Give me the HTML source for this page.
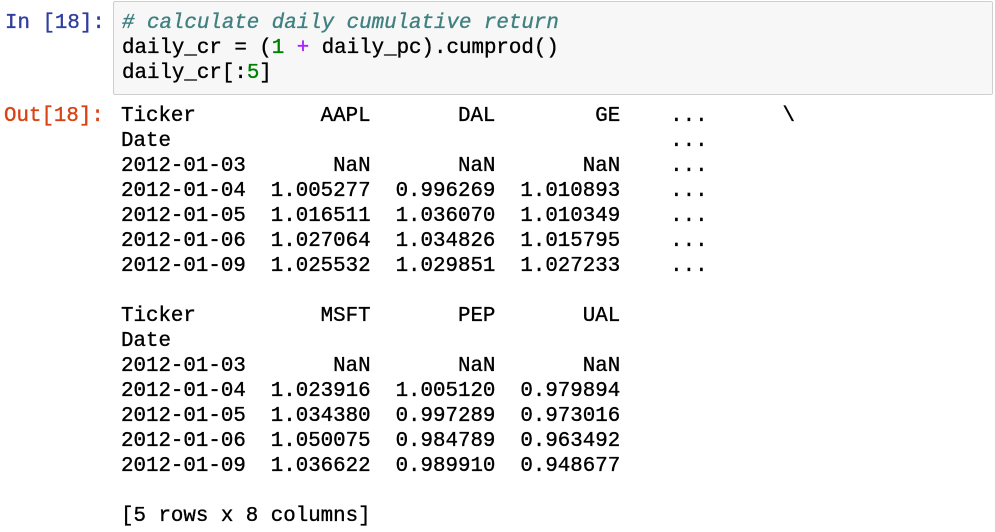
<!DOCTYPE html>
<html><head><style>
body{margin:0;width:995px;height:532px;background:#fff;overflow:hidden;position:relative;font-family:"Liberation Mono",monospace;font-size:20.8px;color:#000;-webkit-text-stroke:0.35px}
.p{position:absolute;white-space:pre;line-height:25px}
.in{color:#303f9f;left:5px;top:11px}
.out{color:#d84315;left:4px;top:104px}
.box{position:absolute;left:113px;top:1px;width:878px;height:92px;border:1px solid #cfcfcf;border-radius:2px;background:#f7f7f7}
.c{color:#408080;font-style:italic}
.n{color:#008000}
.o{color:#aa22ff}
</style></head><body>
<div class="p in">In [18]:</div>
<div class="box"></div>
<div class="p" style="left:122px;top:11px"><span class="c"># calculate daily cumulative return</span>
daily_cr = (<span class="n">1</span> <span class="o">+</span> daily_pc).cumprod()
daily_cr[:<span class="n">5</span>]</div>
<div class="p out">Out[18]:</div>
<div class="p" style="left:121px;top:104px">Ticker          AAPL       DAL        GE    ...      \
Date                                        ...
2012-01-03       NaN       NaN       NaN    ...
2012-01-04  1.005277  0.996269  1.010893    ...
2012-01-05  1.016511  1.036070  1.010349    ...
2012-01-06  1.027064  1.034826  1.015795    ...
2012-01-09  1.025532  1.029851  1.027233    ...

Ticker          MSFT       PEP       UAL
Date
2012-01-03       NaN       NaN       NaN
2012-01-04  1.023916  1.005120  0.979894
2012-01-05  1.034380  0.997289  0.973016
2012-01-06  1.050075  0.984789  0.963492
2012-01-09  1.036622  0.989910  0.948677

[5 rows x 8 columns]</div>
</body></html>
